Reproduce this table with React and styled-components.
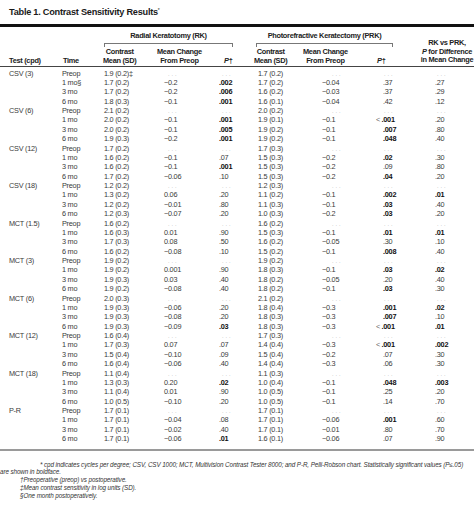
import React from 'react';
import styled, { createGlobalStyle } from 'styled-components';

const FONT = `"Liberation Sans", Arial, sans-serif`;

const GlobalStyle = createGlobalStyle`
  body {
    margin: 0;
    background: #fff;
  }
  * {
    box-sizing: border-box;
  }
`;

// column widths + left padding for data, and extra shift for the ". . ." placeholders
const cols = [
  { w: 60, pl: 9 },
  { w: 40, pl: 2 },
  { w: 60, pl: 4 },
  { w: 54, pl: 4, dot: 4 },
  { w: 38, pl: 5, dot: 3 },
  { w: 66, pl: 6 },
  { w: 60, pl: 4, dot: 10 },
  { w: 52, pl: 5, dot: 1 },
  { w: 44, pl: 5, dot: 2 },
];
const template = cols.map((c) => `${c.w}px`).join(' ');

const Page = styled.div`
  width: 474px;
  height: 506px;
  overflow: hidden;
  font-family: ${FONT};
  color: #333;
`;

const Title = styled.h1`
  margin: 0;
  padding: 7px 0 0 9px;
  font-size: 9.2px;
  line-height: 10px;
  letter-spacing: -0.25px;
  font-weight: bold;
  color: #1a1a1a;
`;

const Sup = styled.sup`
  font-size: 5px;
  font-weight: normal;
  vertical-align: 3px;
  line-height: 0;
`;

const ThickRule = styled.div`
  margin-top: 7px;
  height: 3px;
  background: #111;
`;

const Head = styled.div`
  display: grid;
  grid-template-columns: ${template};
  grid-template-rows: auto auto;
  padding-bottom: 1.5px;
  font-weight: bold;
  font-size: 7.4px;
  letter-spacing: -0.3px;
  line-height: 9px;
  color: #222;
  white-space: nowrap;
`;

const Spanner = styled.div`
  grid-row: 1;
  grid-column: ${(p) => p.$col};
  padding-top: 3.5px;
  padding-left: ${(p) => p.$ml}px;
  padding-right: ${(p) => p.$mr}px;
`;

const SpanTitle = styled.div`
  text-align: center;
`;

const Bracket = styled.div`
  margin-top: 3px;
  height: 4px;
  border: 1px solid #777;
  border-bottom: none;
`;

const SideHead = styled.div`
  grid-row: 1 / 3;
  grid-column: 9;
  align-self: end;
  justify-self: center;
  margin-right: 10px;
  text-align: center;
  line-height: 8.5px;
`;

const Label = styled.div`
  grid-row: 2;
  grid-column: ${(p) => p.$col};
  align-self: end;
  justify-self: start;
  margin-left: ${(p) => p.$ml}px;
  text-align: center;
`;

const ThinRule = styled.div`
  height: 1px;
  background: #444;
`;

const Body = styled.div`
  padding-top: 1.5px;
`;

const Row = styled.div`
  display: grid;
  grid-template-columns: ${template};
  height: 9.385px;
  font-size: 7.3px;
  letter-spacing: -0.25px;
  line-height: 9.385px;
  color: #3a3a3a;
  white-space: nowrap;
`;

const Cell = styled.div`
  padding-left: ${(p) => p.$pl}px;
`;

const B = styled.b`
  font-weight: bold;
  color: #111;
`;

const Dots = styled.span`
  margin-left: ${(p) => p.$shift || 0}px;
  color: #aaa;
  font-size: 5.5px;
  letter-spacing: 0.2px;
`;

const Lt = styled.span`
  margin-left: -7px;
  margin-right: 1.5px;
  color: #666;
`;

const GrayRule = styled.div`
  margin-top: 5px;
  height: 2px;
  background: #9a9a9a;
`;

const Notes = styled.div`
  margin-top: 10px;
  font-style: italic;
  font-size: 6.3px;
  letter-spacing: -0.1px;
  line-height: 7.8px;
  color: #333;
  padding-right: 5px;
`;

const Note = styled.p`
  margin: 0;
  padding-left: ${(p) => p.$pl || 0}px;
  text-indent: ${(p) => p.$indent || 0}px;
`;

const D = '…';
const groups = [
  ['CSV (3)', [
    ['Preop', '1.9 (0.2)‡', D, D, '1.7 (0.2)', D, D, D],
    ['1 mo§', '1.7 (0.2)', '−0.2', '*.002', '1.7 (0.2)', '−0.04', '.37', '.27'],
    ['3 mo', '1.7 (0.2)', '−0.2', '*.006', '1.6 (0.2)', '−0.03', '.37', '.29'],
    ['6 mo', '1.8 (0.3)', '−0.1', '*.001', '1.6 (0.1)', '−0.04', '.42', '.12'],
  ]],
  ['CSV (6)', [
    ['Preop', '2.1 (0.2)', D, D, '2.0 (0.2)', D, D, D],
    ['1 mo', '2.0 (0.2)', '−0.1', '*.001', '1.9 (0.1)', '−0.1', '<*.001', '.20'],
    ['3 mo', '2.0 (0.2)', '−0.1', '*.005', '1.9 (0.2)', '−0.1', '*.007', '.80'],
    ['6 mo', '1.9 (0.3)', '−0.2', '*.001', '1.9 (0.2)', '−0.1', '*.048', '.40'],
  ]],
  ['CSV (12)', [
    ['Preop', '1.7 (0.2)', D, D, '1.7 (0.3)', D, D, D],
    ['1 mo', '1.6 (0.2)', '−0.1', '.07', '1.5 (0.3)', '−0.2', '*.02', '.30'],
    ['3 mo', '1.6 (0.2)', '−0.1', '*.001', '1.5 (0.3)', '−0.2', '.09', '.80'],
    ['6 mo', '1.7 (0.2)', '−0.06', '.10', '1.5 (0.3)', '−0.2', '*.04', '.20'],
  ]],
  ['CSV (18)', [
    ['Preop', '1.2 (0.2)', D, D, '1.2 (0.3)', D, D, D],
    ['1 mo', '1.3 (0.2)', '0.06', '.20', '1.1 (0.2)', '−0.1', '*.002', '*.01'],
    ['3 mo', '1.2 (0.2)', '−0.01', '.80', '1.1 (0.3)', '−0.1', '*.03', '.40'],
    ['6 mo', '1.2 (0.3)', '−0.07', '.20', '1.0 (0.3)', '−0.2', '*.03', '.20'],
  ]],
  ['MCT (1.5)', [
    ['Preop', '1.6 (0.2)', D, D, '1.6 (0.2)', D, D, D],
    ['1 mo', '1.6 (0.3)', '0.01', '.90', '1.5 (0.3)', '−0.1', '*.01', '*.01'],
    ['3 mo', '1.7 (0.3)', '0.08', '.50', '1.6 (0.2)', '−0.05', '.30', '.10'],
    ['6 mo', '1.6 (0.2)', '−0.08', '.10', '1.5 (0.2)', '−0.1', '*.008', '.40'],
  ]],
  ['MCT (3)', [
    ['Preop', '1.9 (0.2)', D, D, '1.9 (0.2)', D, D, D],
    ['1 mo', '1.9 (0.2)', '0.001', '.90', '1.8 (0.3)', '−0.1', '*.03', '*.02'],
    ['3 mo', '1.9 (0.3)', '0.03', '.40', '1.8 (0.2)', '−0.05', '.20', '.40'],
    ['6 mo', '1.9 (0.2)', '−0.08', '.40', '1.8 (0.2)', '−0.1', '*.03', '.30'],
  ]],
  ['MCT (6)', [
    ['Preop', '2.0 (0.3)', D, D, '2.1 (0.2)', D, D, D],
    ['1 mo', '1.9 (0.3)', '−0.06', '.20', '1.8 (0.4)', '−0.3', '*.001', '*.02'],
    ['3 mo', '1.9 (0.3)', '−0.08', '.20', '1.8 (0.3)', '−0.3', '*.007', '.10'],
    ['6 mo', '1.9 (0.3)', '−0.09', '*.03', '1.8 (0.3)', '−0.3', '<*.001', '*.01'],
  ]],
  ['MCT (12)', [
    ['Preop', '1.6 (0.4)', D, D, '1.7 (0.3)', D, D, D],
    ['1 mo', '1.7 (0.3)', '0.07', '.07', '1.4 (0.4)', '−0.3', '<*.001', '*.002'],
    ['3 mo', '1.5 (0.4)', '−0.10', '.09', '1.5 (0.4)', '−0.2', '.07', '.30'],
    ['6 mo', '1.6 (0.4)', '−0.06', '.40', '1.4 (0.4)', '−0.3', '.06', '.30'],
  ]],
  ['MCT (18)', [
    ['Preop', '1.1 (0.4)', D, D, '1.1 (0.3)', D, D, D],
    ['1 mo', '1.3 (0.3)', '0.20', '*.02', '1.0 (0.4)', '−0.1', '*.048', '*.003'],
    ['3 mo', '1.1 (0.4)', '0.01', '.90', '1.0 (0.5)', '−0.1', '.25', '.20'],
    ['6 mo', '1.0 (0.5)', '−0.10', '.20', '1.0 (0.5)', '−0.1', '.14', '.70'],
  ]],
  ['P-R', [
    ['Preop', '1.7 (0.1)', D, D, '1.7 (0.1)', D, D, D],
    ['1 mo', '1.7 (0.1)', '−0.04', '.08', '1.7 (0.1)', '−0.06', '*.001', '.60'],
    ['3 mo', '1.7 (0.1)', '−0.02', '.40', '1.7 (0.1)', '−0.01', '.80', '.70'],
    ['6 mo', '1.7 (0.1)', '−0.06', '*.01', '1.6 (0.1)', '−0.06', '.07', '.90'],
  ]],
];

function Value({ v, col }) {
  if (v === D) return <Dots $shift={col.dot}>. . .</Dots>;
  let text = v;
  let lt = false;
  if (text.startsWith('<')) {
    lt = true;
    text = text.slice(1);
  }
  const bold = text.startsWith('*');
  if (bold) text = text.slice(1);
  return (
    <>
      {lt && <Lt>&lt;</Lt>}
      {bold ? <B>{text}</B> : text}
    </>
  );
}

function App() {
  return (
    <Page>
      <GlobalStyle />
      <Title>
        Table 1. Contrast Sensitivity Results<Sup>*</Sup>
      </Title>
      <ThickRule />
      <Head>
        <Spanner $col="3 / 6" $ml={4} $mr={19}>
          <SpanTitle>Radial Keratotomy (RK)</SpanTitle>
          <Bracket />
        </Spanner>
        <Spanner $col="6 / 9" $ml={4} $mr={37}>
          <SpanTitle>Photorefractive Keratectomy (PRK)</SpanTitle>
          <Bracket />
        </Spanner>
        <SideHead>
          RK vs PRK,
          <br />
          <i>P</i> for Difference
          <br />
          in Mean Change
        </SideHead>
        <Label $col={1} $ml={9}>Test (cpd)</Label>
        <Label $col={2} $ml={3}>Time</Label>
        <Label $col={3} $ml={3}>
          Contrast
          <br />
          Mean (SD)
        </Label>
        <Label $col={4} $ml={-3}>
          Mean Change
          <br />
          From Preop
        </Label>
        <Label $col={5} $ml={10}>
          <i>P</i>†
        </Label>
        <Label $col={6} $ml={2}>
          Contrast
          <br />
          Mean (SD)
        </Label>
        <Label $col={7} $ml={-15}>
          Mean Change
          <br />
          From Preop
        </Label>
        <Label $col={8} $ml={-1}>
          <i>P</i>†
        </Label>
      </Head>
      <ThinRule />
      <Body>
        {groups.map(([name, rows]) =>
          rows.map((r, i) => (
            <Row key={name + i}>
              <Cell $pl={cols[0].pl}>{i === 0 ? name : ''}</Cell>
              {r.map((v, j) => (
                <Cell key={j} $pl={cols[j + 1].pl}>
                  <Value v={v} col={cols[j + 1]} />
                </Cell>
              ))}
            </Row>
          ))
        )}
      </Body>
      <GrayRule />
      <Notes>
        <Note $indent={40}>
          * cpd indicates cycles per degree; CSV, CSV 1000; MCT, Multivision Contrast Tester 8000; and P-R,
          Pelli-Robson chart. Statistically significant values (P≤.05) are shown in boldface.
        </Note>
        <Note $pl={20}>†Preoperative (preop) vs postoperative.</Note>
        <Note $pl={20}>‡Mean contrast sensitivity in log units (SD).</Note>
        <Note $pl={20}>§One month postoperatively.</Note>
      </Notes>
    </Page>
  );
}

export default App;
